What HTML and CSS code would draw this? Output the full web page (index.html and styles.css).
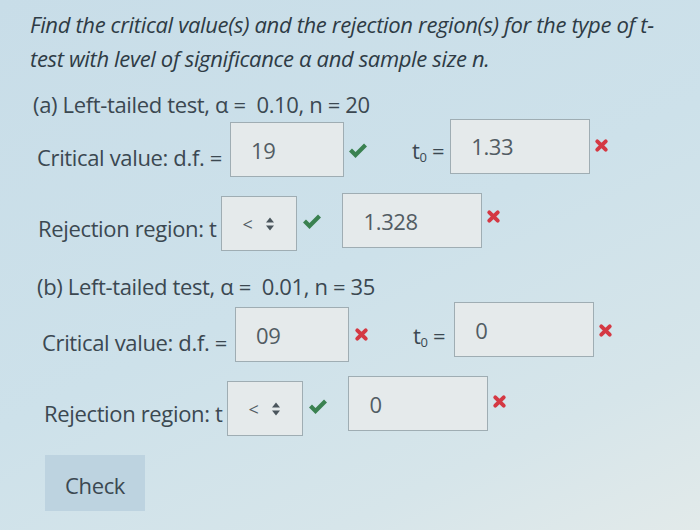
FILE: index.html
```html
<!DOCTYPE html>
<html>
<head>
<meta charset="utf-8">
<link rel="stylesheet" href="styles.css">
</head>
<body>
<div class="page">
  <p class="intro">Find the critical value(s) and the rejection region(s) for the type of t-<br>test with level of significance α and sample size n.</p>

  <p class="part part-a">(a) Left-tailed test, α = &nbsp;0.10, n = 20</p>

  <div class="row row-a1">
    <span class="label">Critical value: d.f. =</span>
    <span class="box box-df">19</span>
    <svg class="mark ok" viewBox="0 0 20 16"><path d="M2.5 8 L7.5 13 L17.5 3"/></svg>
    <span class="tlabel">t<sub>0</sub> =</span>
    <span class="box box-t0">1.33</span>
    <svg class="mark bad" viewBox="0 0 16 16"><path d="M3.5 3.5 L12.5 12.5 M12.5 3.5 L3.5 12.5"/></svg>
  </div>

  <div class="row row-a2">
    <span class="label">Rejection region: t</span>
    <span class="box box-sel">&lt;<svg class="updown" viewBox="0 0 8 14"><path d="M4 0.5 L8 5.5 L0 5.5 Z M4 13.5 L8 8.5 L0 8.5 Z"/></svg></span>
    <svg class="mark ok" viewBox="0 0 20 16"><path d="M2.5 8 L7.5 13 L17.5 3"/></svg>
    <span class="box box-rr">1.328</span>
    <svg class="mark bad" viewBox="0 0 16 16"><path d="M3.5 3.5 L12.5 12.5 M12.5 3.5 L3.5 12.5"/></svg>
  </div>

  <p class="part part-b">(b) Left-tailed test, α = &nbsp;0.01, n = 35</p>

  <div class="row row-b1">
    <span class="label">Critical value: d.f. =</span>
    <span class="box box-df">09</span>
    <svg class="mark bad" viewBox="0 0 16 16"><path d="M3.5 3.5 L12.5 12.5 M12.5 3.5 L3.5 12.5"/></svg>
    <span class="tlabel">t<sub>0</sub> =</span>
    <span class="box box-t0">0</span>
    <svg class="mark bad" viewBox="0 0 16 16"><path d="M3.5 3.5 L12.5 12.5 M12.5 3.5 L3.5 12.5"/></svg>
  </div>

  <div class="row row-b2">
    <span class="label">Rejection region: t</span>
    <span class="box box-sel">&lt;<svg class="updown" viewBox="0 0 8 14"><path d="M4 0.5 L8 5.5 L0 5.5 Z M4 13.5 L8 8.5 L0 8.5 Z"/></svg></span>
    <svg class="mark ok" viewBox="0 0 20 16"><path d="M2.5 8 L7.5 13 L17.5 3"/></svg>
    <span class="box box-rr">0</span>
    <svg class="mark bad" viewBox="0 0 16 16"><path d="M3.5 3.5 L12.5 12.5 M12.5 3.5 L3.5 12.5"/></svg>
  </div>

  <div class="btn">Check</div>
</div>
</body>
</html>
```

FILE: styles.css
```css
html, body {
  margin: 0;
  padding: 0;
}
body {
  width: 700px;
  height: 530px;
  overflow: hidden;
  background: linear-gradient(155deg, #c8dde8 0%, #cde1ea 50%, #d6e5ea 80%, #e2eaea 100%);
  font-family: "Open Sans", "Noto Sans", sans-serif;
  color: #3b4851;
}
.page {
  padding: 7px 0 0 30px;
}
.intro {
  margin: 0;
  font-style: italic;
  font-size: 22px;
  line-height: 34px;
  letter-spacing: -0.35px;
  color: #2e3b45;
}
.part {
  margin: 0;
  font-size: 22px;
  line-height: 33px;
  letter-spacing: -0.35px;
}
.part-a {
  margin-top: 13px;
  padding-left: 3px;
}
.part-b {
  margin-top: 22px;
  padding-left: 7px;
}
.row {
  display: flex;
  align-items: center;
  font-size: 22px;
  letter-spacing: -0.35px;
  height: 55px;
}
.row-a1 { margin-top: 1px; padding-left: 7px; }
.row-a2 { margin-top: 16px; padding-left: 8px; }
.row-b1 { margin-top: 4px; padding-left: 12px; }
.row-b2 { margin-top: 16px; padding-left: 14px; }
.label {
  padding-top: 14px;
}
.box {
  box-sizing: border-box;
  height: 55px;
  background: #e5eaeb;
  border: 1.5px solid #9fadb3;
  display: flex;
  align-items: center;
  padding-left: 20px;
  color: #525c63;
}
.box-df { width: 114px; margin-left: 8px; }
.box-t0 { width: 140px; }
.row-a1 .box-t0 { margin-top: -7px; }
.row-b1 .box-t0 { margin-top: -10px; }
.box-sel {
  width: 76px;
  padding-left: 20px;
  gap: 14px;
  font-size: 18px;
  margin-left: 5px;
}
.row-a2 .box-sel, .row-b2 .box-sel { margin-top: 6px; }
.box-rr { width: 140px; margin-left: 20px; }
.row-b2 .box-rr { margin-top: -4px; }
.updown {
  width: 8px;
  height: 14px;
  fill: #4a555c;
}
.mark {
  flex: none;
  margin-left: 4px;
  fill: none;
}
.ok {
  width: 20px;
  height: 16px;
  stroke: #3a8150;
  stroke-width: 4.2;
  stroke-linecap: butt;
  stroke-linejoin: miter;
}
.bad {
  width: 15px;
  height: 15px;
  stroke: #d43843;
  stroke-width: 4.2;
  stroke-linecap: round;
  margin-top: -8px;
}
.row-a2 .ok, .row-b2 .ok { margin-left: 5px; }
.row-a2 .box-rr, .row-b2 .box-rr { margin-left: 20px; }
.tlabel {
  margin-left: 44px;
  margin-right: 6px;
  padding-top: 2px;
}
.row-b1 .tlabel { margin-left: 44px; margin-right: 9px; }
.row-b1 .box-df + .mark { margin-left: 5px; margin-top: 0; }
.tlabel sub {
  font-size: 13px;
  vertical-align: -3px;
}
.btn {
  margin-top: 22px;
  margin-left: 15px;
  width: 100px;
  height: 56px;
  background: #bdd3e0;
  display: flex;
  align-items: center;
  padding-left: 20px;
  padding-top: 4px;
  box-sizing: border-box;
  font-size: 22px;
  letter-spacing: -0.35px;
}
```
